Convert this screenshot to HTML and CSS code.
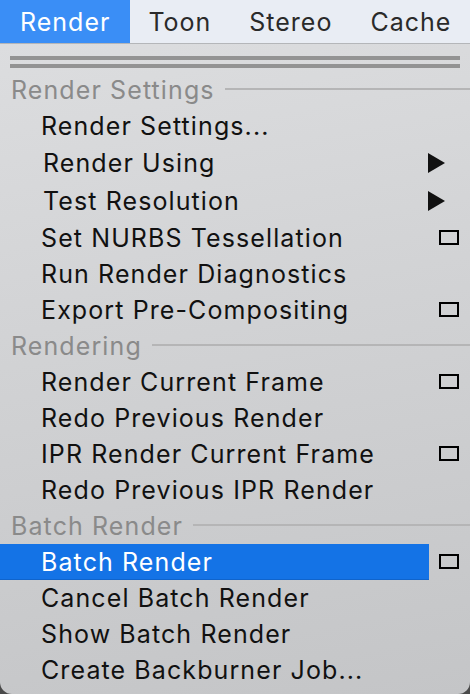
FILE: index.html
```html
<!DOCTYPE html>
<html>
<head>
<meta charset="utf-8">
<link rel="stylesheet" href="styles.css">
</head>
<body>
<div class="window">
  <div class="menubar">
    <div class="tab active">Render</div>
    <div class="tab">Toon</div>
    <div class="tab">Stereo</div>
    <div class="tab">Cache</div>
  </div>
  <div class="menu">
    <div class="tearoff"><span></span><span></span></div>
    <div class="header"><span class="htext">Render Settings</span><span class="hline"></span></div>
    <div class="item"><span class="label">Render Settings...</span></div>
    <div class="item sub"><span class="label">Render Using</span><span class="arrow"></span></div>
    <div class="item sub"><span class="label">Test Resolution</span><span class="arrow"></span></div>
    <div class="item"><span class="label">Set NURBS Tessellation</span><span class="box"></span></div>
    <div class="item"><span class="label">Run Render Diagnostics</span></div>
    <div class="item"><span class="label">Export Pre-Compositing</span><span class="box"></span></div>
    <div class="header"><span class="htext">Rendering</span><span class="hline"></span></div>
    <div class="item"><span class="label">Render Current Frame</span><span class="box"></span></div>
    <div class="item"><span class="label">Redo Previous Render</span></div>
    <div class="item"><span class="label">IPR Render Current Frame</span><span class="box"></span></div>
    <div class="item"><span class="label">Redo Previous IPR Render</span></div>
    <div class="header"><span class="htext">Batch Render</span><span class="hline"></span></div>
    <div class="item selected"><span class="label">Batch Render</span><span class="box"></span></div>
    <div class="item"><span class="label">Cancel Batch Render</span></div>
    <div class="item"><span class="label">Show Batch Render</span></div>
    <div class="item"><span class="label">Create Backburner Job...</span></div>
  </div>
</div>
</body>
</html>
```

FILE: styles.css
```css
html, body {
  margin: 0;
  padding: 0;
  width: 470px;
  height: 694px;
  background: #4a4a4a;
  overflow: hidden;
}
.window {
  width: 470px;
  height: 694px;
  display: flex;
  flex-direction: column;
  font-family: Inter, "Open Sans", "Liberation Sans", sans-serif;
}
.menubar {
  height: 43px;
  background: #e9edf4;
  border-bottom: 1px solid #b4b6b9;
  display: flex;
  align-items: stretch;
}
.tab {
  font-size: 25px;
  letter-spacing: 1px;
  color: #2a2a2a;
  display: flex;
  align-items: center;
  padding: 0 19px;
}
.tab.active {
  background: #3a8ef6;
  color: #ffffff;
  padding: 0 20px 0 20px;
}
.tab.active + .tab { padding-left: 18px; }
.menu {
  flex: 1;
  background: linear-gradient(170deg, #dcdddf 0%, #d2d3d5 40%, #c4c5c7 100%);
  border-radius: 0 0 12px 12px;
  padding-top: 12px;
  display: flex;
  flex-direction: column;
}
.tearoff {
  margin: 0 10px;
  display: flex;
  flex-direction: column;
  gap: 4px;
  height: 16px;
}
.tearoff span {
  display: block;
  height: 4px;
  background: #939393;
}
.header {
  height: 36px;
  display: flex;
  align-items: center;
  padding-left: 11px;
}
.htext {
  font-size: 25px;
  letter-spacing: 1.1px;
  color: #8a8a8a;
  white-space: nowrap;
}
.hline {
  flex: 1;
  height: 2px;
  background: #b5b5b6;
  margin-left: 10px;
  margin-top: -2px;
}
.item {
  height: 36px;
  display: flex;
  align-items: center;
  position: relative;
  padding-left: 41px;
}
.item.sub {
  height: 38px;
  padding-left: 43px;
}
.label {
  font-size: 25px;
  letter-spacing: 1.1px;
  color: #111111;
  white-space: nowrap;
}
.item.selected::before {
  content: "";
  position: absolute;
  left: 0;
  top: 0;
  width: 429px;
  height: 36px;
  background: #1473e6;
  border-bottom: 1px solid #1064cc;
  box-sizing: border-box;
}
.item.selected .label {
  color: #ffffff;
  position: relative;
}
.arrow {
  position: absolute;
  left: 428px;
  top: 9px;
  width: 0;
  height: 0;
  border-top: 10px solid transparent;
  border-bottom: 10px solid transparent;
  border-left: 17px solid #111111;
}
.box {
  position: absolute;
  left: 439px;
  top: 10px;
  width: 20px;
  height: 15px;
  border: 2px solid #000000;
  box-sizing: border-box;
}
```
